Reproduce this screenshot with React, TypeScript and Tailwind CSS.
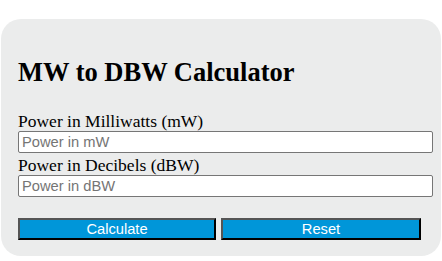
export default function App() {
  return (
    <div className="w-[442px] h-[261px] bg-white pt-[19px]">
      <div
        className="ml-[1px] w-[440px] h-[237px] rounded-[20px] bg-[#ebecec] pl-[17px] pt-[39px] text-black"
        style={{ fontFamily: '"Liberation Serif", "Times New Roman", serif' }}
      >
        <h2 className="text-[26.5px] font-bold leading-[28px] m-0">MW to DBW Calculator</h2>
        <div className="mt-[25px] text-[17.5px] leading-[20px]">Power in Milliwatts (mW)</div>
        <input
          type="text"
          placeholder="Power in mW"
          className="block w-[415px] h-[22px] border border-[#767676] rounded-[2px] bg-white px-[3px] text-[14.7px] placeholder:text-[#757575] outline-none"
          style={{ fontFamily: '"Liberation Sans", Arial, sans-serif' }}
        />
        <div className="mt-[2px] text-[17.5px] leading-[20px]">Power in Decibels (dBW)</div>
        <input
          type="text"
          placeholder="Power in dBW"
          className="block w-[415px] h-[22px] border border-[#767676] rounded-[2px] bg-white px-[3px] text-[14.7px] placeholder:text-[#757575] outline-none"
          style={{ fontFamily: '"Liberation Sans", Arial, sans-serif' }}
        />
        <div
          className="mt-[21px] flex gap-[5px]"
          style={{ fontFamily: '"Liberation Sans", Arial, sans-serif' }}
        >
          <button className="w-[198px] h-[22px] bg-[#0096d9] text-white text-[14.7px] leading-[18px] border-2 border-t-[#555555] border-l-[#555555] border-b-black border-r-black">
            Calculate
          </button>
          <button className="w-[200px] h-[22px] bg-[#0096d9] text-white text-[14.7px] leading-[18px] border-2 border-t-[#555555] border-l-[#555555] border-b-black border-r-black">
            Reset
          </button>
        </div>
      </div>
    </div>
  );
}
